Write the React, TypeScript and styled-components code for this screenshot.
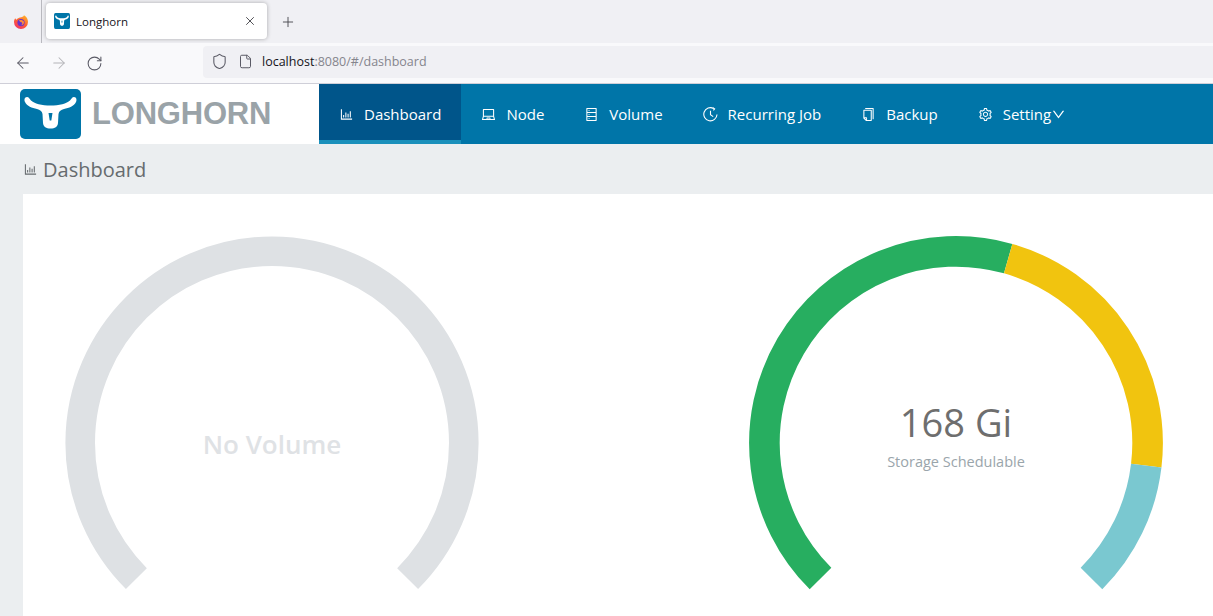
import React, { FC } from "react";
import styled, { createGlobalStyle } from "styled-components";
import { ArrowLeft, ArrowRight, File, Plus, RotateCw, Shield, X } from "lucide-react";
import {
  AiOutlineBarChart,
  AiOutlineCopy,
  AiOutlineDatabase,
  AiOutlineDown,
  AiOutlineLaptop,
  AiOutlineSetting,
} from "react-icons/ai";

const GlobalStyle = createGlobalStyle`
  html, body {
    margin: 0;
    height: 100%;
    overflow: hidden;
    background: #ebeef0;
  }
  body {
    font-family: "Open Sans", "Noto Sans", sans-serif;
  }
`;

const Page = styled.div`
  width: 1213px;
  height: 616px;
  overflow: hidden;
  display: flex;
  flex-direction: column;
`;

/* browser chrome */
const TabStrip = styled.div`
  height: 43px;
  flex: none;
  background: #f0f0f4;
  display: flex;
  align-items: center;
`;

const AppTile = styled.div`
  width: 41px;
  height: 43px;
  border-right: 1px solid #b9b9bf;
  display: flex;
  align-items: center;
  justify-content: center;
  box-sizing: content-box;
  padding-right: 0;
  margin-right: 4px;
`;

const Tab = styled.div`
  width: 221px;
  height: 36px;
  margin-top: -1px;
  background: #fff;
  border-radius: 4px;
  box-shadow: 0 0 4px rgba(0, 0, 0, 0.3);
  display: flex;
  align-items: center;
  padding: 0 10px 0 8px;
  box-sizing: border-box;
`;

const TabTitle = styled.span`
  flex: 1;
  margin-left: 6px;
  font-size: 11.5px;
  color: #15141a;
`;

const NewTab = styled.div`
  margin-left: 13px;
  color: #4a4a50;
  display: flex;
`;

const Toolbar = styled.div`
  height: 41px;
  flex: none;
  box-sizing: border-box;
  background: #f9f9fb;
  border-bottom: 1px solid #cfcfd8;
  display: flex;
  align-items: center;
  padding-left: 14px;
`;

const ToolButton = styled.div<{ $muted?: boolean }>`
  width: 18px;
  margin-right: 18px;
  display: flex;
  color: ${(p) => (p.$muted ? "#b4b4b8" : "#5b5b66")};
`;

const UrlBar = styled.div`
  flex: 1;
  height: 32px;
  margin-left: 81px;
  margin-top: -3px;
  background: #f0f0f4;
  border-radius: 4px 0 0 4px;
  display: flex;
  align-items: center;
  padding-left: 8px;
  color: #5b5b66;
  gap: 10px;
`;

const UrlText = styled.span`
  font-size: 12.5px;
  color: #85858d;
  margin-left: -1px;
  b {
    font-weight: 400;
    color: #15141a;
  }
`;

/* app header */
const Header = styled.header`
  height: 60px;
  flex: none;
  display: flex;
  background: #fff;
`;

const Brand = styled.div`
  width: 319px;
  flex: none;
  box-sizing: border-box;
  padding-left: 20px;
  display: flex;
  align-items: center;
  gap: 11px;
`;

const Wordmark = styled.span`
  font-family: "Liberation Sans", Arial, sans-serif;
  font-weight: 700;
  font-size: 31px;
  letter-spacing: -0.2px;
  color: #9aa3a8;
`;

const Nav = styled.nav`
  flex: 1;
  display: flex;
  background: #0075a8;
`;

const NavItem = styled.a<{ $active?: boolean }>`
  display: flex;
  align-items: center;
  gap: 10px;
  padding: 0 20px;
  font-size: 15px;
  color: #fff;
  box-sizing: border-box;
  background: ${(p) => (p.$active ? "#00558a" : "transparent")};
  border-bottom: 4px solid ${(p) => (p.$active ? "#1a90bb" : "transparent")};
  padding-top: 4px;
  svg {
    font-size: 15px;
    flex: none;
  }
`;

const SettingLabel = styled.span`
  display: flex;
  align-items: center;
  svg {
    font-size: 15px;
  }
`;

/* content */
const Content = styled.main`
  flex: 1;
  min-height: 0;
  padding-left: 23px;
`;

const PageTitle = styled.h1`
  height: 50px;
  margin: 0;
  display: flex;
  align-items: center;
  gap: 5px;
  font-size: 20px;
  font-weight: 400;
  color: #666b6e;
  svg {
    font-size: 15px;
    margin-left: 0;
  }
`;

const Card = styled.section`
  background: #fff;
  height: 422px;
  box-sizing: border-box;
  padding: 39px 0 0 39px;
  display: grid;
  grid-template-columns: 684px 420px;
  align-items: start;
`;

const Gauge = styled.div`
  position: relative;
  width: 420px;
  height: 420px;
`;

const GaugeSvg = styled.svg`
  display: block;
  width: 420px;
  height: 420px;
`;

const GaugeCenter = styled.div`
  position: absolute;
  left: 0;
  right: 0;
  top: 166px;
  text-align: center;
`;

const EmptyLabel = styled.div`
  padding-top: 27px;
  font-size: 26px;
  font-weight: 600;
  color: #dfe2e5;
`;

const GaugeValue = styled.div`
  font-size: 38px;
  line-height: 46px;
  color: #6e6e6e;
`;

const GaugeCaption = styled.div`
  margin-top: 7px;
  font-size: 14.5px;
  color: #9aa5ab;
`;

const polar = (r: number, deg: number) => {
  const a = ((deg - 90) * Math.PI) / 180;
  return `${210 + r * Math.cos(a)} ${210 + r * Math.sin(a)}`;
};

const arc = (r: number, from: number, to: number) =>
  `M ${polar(r, from)} A ${r} ${r} 0 ${to - from > 180 ? 1 : 0} 1 ${polar(r, to)}`;

interface Segment {
  from: number;
  to: number;
  color: string;
}

const GaugeRing: FC<{ segments: Segment[]; r: number; width: number }> = ({ segments, r, width }) => (
  <GaugeSvg viewBox="0 0 420 420">
    {segments.map((s) => (
      <path key={s.color} d={arc(r, s.from, s.to)} fill="none" stroke={s.color} strokeWidth={width} />
    ))}
  </GaugeSvg>
);

const BullMark: FC<{ size: number; height: number; radius: number }> = ({ size, height, radius }) => (
  <svg width={size} height={height} viewBox="0 0 61 50" preserveAspectRatio="none">
    <rect width="61" height="50" rx={radius} fill="#0075a8" />
    <path
      d="M7 8C4.5 8 4 11 5 13C7 17 12 19 17 20C20 21 22 22 22.5 25L23 34C23.5 38 26 39.5 30.5 39.5C35 39.5 37.5 38 38 34L38.5 25C39 22 41 21 44 20C49 19 54 17 56 13C57 11 56.5 8 54 8C52 8 51.5 10 50 11.5C47 14.5 39 16.5 30.5 16.5C22 16.5 14 14.5 11 11.5C9.5 10 9 8 7 8Z"
      fill="#fff"
    />
    <path d="M28.5 24H32.5L31.3 31.5H29.7Z" fill="#0075a8" />
  </svg>
);

const FirefoxMark: FC = () => (
  <svg width="16" height="16" viewBox="0 0 16 16">
    <defs>
      <linearGradient id="ffBody" x1="0.8" y1="0" x2="0.2" y2="1">
        <stop offset="0" stopColor="#ffb32a" />
        <stop offset="0.5" stopColor="#ff6030" />
        <stop offset="1" stopColor="#f0306a" />
      </linearGradient>
    </defs>
    <path d="M11 1.2C13.6 2.6 15 5.2 15 8A7 7 0 1 1 1 8C1 6.6 1.5 5 2.3 4.2C2.6 5 3 5.4 3.5 5.7C4.4 4.2 6 3.6 7 3.4C8.8 3 10.6 2.6 11 1.2Z" fill="url(#ffBody)" />
    <circle cx="8" cy="8.6" r="3.6" fill="#6a34c8" />
    <path d="M6 6.4C7.6 5.6 10.4 6.2 11 8C11.2 9.8 9.8 11.2 8 11.2C9.6 10.4 9.6 8.6 8.4 8.2C7.6 8 6.8 7.4 6 6.4Z" fill="#ff8a3a" />
  </svg>
);

const RecurringIcon: FC = () => (
  <svg width="15" height="15" viewBox="0 0 15 15" fill="none" stroke="#fff" strokeWidth="1.1">
    <path d="M10.6 1.5A6.6 6.6 0 1 0 14 7.5" />
    <path d="M7.5 3.8V7.8L10.2 9.6" />
    <path d="M9.8 0.8L11.6 1.8L10.4 3.4" />
  </svg>
);

const navItems = [
  { label: "Dashboard", icon: <AiOutlineBarChart />, active: true },
  { label: "Node", icon: <AiOutlineLaptop /> },
  { label: "Volume", icon: <AiOutlineDatabase /> },
  { label: "Recurring Job", icon: <RecurringIcon /> },
  { label: "Backup", icon: <AiOutlineCopy /> },
];

const App: FC = () => (
  <Page>
    <GlobalStyle />
    <TabStrip>
      <AppTile>
        <FirefoxMark />
      </AppTile>
      <Tab>
        <BullMark size={16} height={16} radius={6} />
        <TabTitle>Longhorn</TabTitle>
        <X size={14} strokeWidth={1.5} color="#3a3a40" />
      </Tab>
      <NewTab>
        <Plus size={16} strokeWidth={1.4} />
      </NewTab>
    </TabStrip>
    <Toolbar>
      <ToolButton>
        <ArrowLeft size={18} strokeWidth={1.4} />
      </ToolButton>
      <ToolButton $muted>
        <ArrowRight size={18} strokeWidth={1.4} />
      </ToolButton>
      <ToolButton>
        <RotateCw size={17} strokeWidth={1.5} />
      </ToolButton>
      <UrlBar>
        <Shield size={17} strokeWidth={1.5} />
        <File size={15} strokeWidth={1.6} />
        <UrlText>
          <b>localhost</b>:8080/#/dashboard
        </UrlText>
      </UrlBar>
    </Toolbar>
    <Header>
      <Brand>
        <BullMark size={61} height={50} radius={5} />
        <Wordmark>LONGHORN</Wordmark>
      </Brand>
      <Nav>
        {navItems.map((item) => (
          <NavItem key={item.label} $active={item.active}>
            {item.icon}
            {item.label}
          </NavItem>
        ))}
        <NavItem>
          <AiOutlineSetting />
          <SettingLabel>
            Setting
            <AiOutlineDown />
          </SettingLabel>
        </NavItem>
      </Nav>
    </Header>
    <Content>
      <PageTitle>
        <AiOutlineBarChart />
        Dashboard
      </PageTitle>
      <Card>
        <Gauge>
          <GaugeRing r={191.8} width={29.6} segments={[{ from: -135, to: 135, color: "#dee1e4" }]} />
          <GaugeCenter>
            <EmptyLabel>No Volume</EmptyLabel>
          </GaugeCenter>
        </Gauge>
        <Gauge>
          <GaugeRing
            r={191.6}
            width={30.6}
            segments={[
              { from: -135, to: 15.8, color: "#27ae60" },
              { from: 15.8, to: 96.8, color: "#f1c40f" },
              { from: 96.8, to: 135, color: "#7ac8d0" },
            ]}
          />
          <GaugeCenter>
            <GaugeValue>168 Gi</GaugeValue>
            <GaugeCaption>Storage Schedulable</GaugeCaption>
          </GaugeCenter>
        </Gauge>
      </Card>
    </Content>
  </Page>
);

export default App;
